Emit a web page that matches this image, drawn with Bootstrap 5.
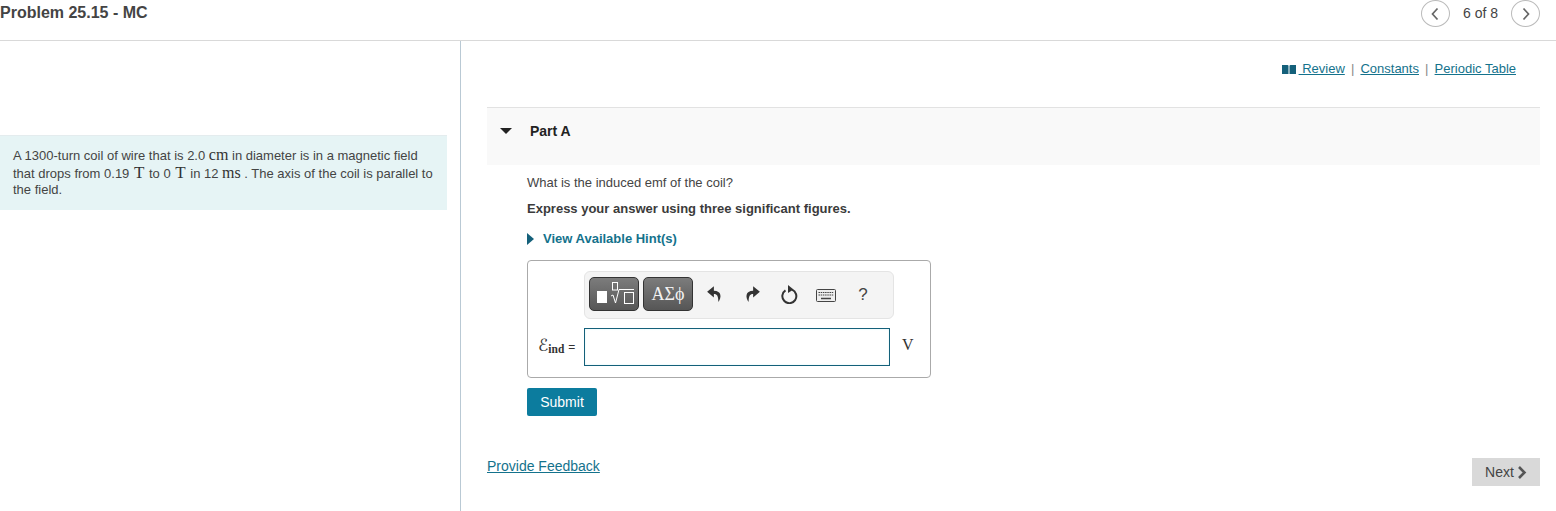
<!DOCTYPE html>
<html lang="en">
<head>
    <meta charset="UTF-8">
    <meta name="viewport" content="width=device-width, initial-scale=1.0">
    <title>Problem 25.15 - MC</title>
    <link href="https://cdn.jsdelivr.net/npm/bootstrap@5.3.3/dist/css/bootstrap.min.css" rel="stylesheet">
    <style>
        html, body { height: 511px; overflow: hidden; }
        body { font-family: "Liberation Sans", Arial, sans-serif; font-size: 13px; color: #333; background: #fff; }
        a { color: #14728c; }
        .top-bar { height: 41px; border-bottom: 1px solid #d9d9d9; }
        .prob-title { font-size: 16px; font-weight: 700; color: #444; margin: 3px 0 0; line-height: 20px; }
        .pager { margin: 0 16px 0 0; font-size: 14px; color: #444; gap: 13px; }
        .round-btn { width: 29px; height: 27px; border: 1px solid #bbb; border-radius: 50%; background: #fff; padding: 0; }
        .round-btn svg { display: block; margin: 0 auto; }
        .side-pane { width: 461px; height: 470px; border-right: 1px solid #b9c9d4; padding-top: 94px; }
        .intro-box { width: 447px; height: 75px; background: #e6f4f5; border-top: 1px solid #e4ecee; padding: 11px 13px 0; font-size: 13px; line-height: 16px; color: #444; }
        .unit-txt { font-family: "Liberation Serif", serif; font-size: 16px; line-height: 1; color: #333; }
        .unit-tesla { font-size: 17px; padding: 0 1px; }
        .work-pane { padding: 0 16px 0 26px; }
        .link-row { height: 66px; padding: 19px 24px 0 0; font-size: 13px; line-height: 17px; color: #888; }
        .link-book { margin-right: 3px; }
        .link-sep { margin: 0 2.5px; }
        .part-head { height: 58px; background: #f9f9f9; border-top: 1px solid #e2e2e2; padding: 14px 0 0 13px; font-size: 14px; font-weight: 700; color: #222; line-height: 18px; gap: 18px; }
        .tri-down { width: 0; height: 0; margin-top: 6px; border-left: 6px solid transparent; border-right: 6px solid transparent; border-top: 6px solid #222; }
        .tri-right { width: 0; height: 0; border-top: 6px solid transparent; border-bottom: 6px solid transparent; border-left: 7px solid #14607a; }
        .part-body { padding: 9px 0 0 40px; }
        .ask-txt { font-size: 13px; line-height: 18px; color: #444; margin: 0 0 8px; }
        .ask-note { font-size: 13px; font-weight: 700; line-height: 18px; color: #3b3b3b; margin: 0 0 12px; }
        .hint-link { font-size: 13px; font-weight: 700; line-height: 18px; color: #14728c; text-decoration: none; gap: 9px; }
        .answer-box { width: 404px; height: 118px; margin-top: 12px; border: 1px solid #aaa; border-radius: 4px; padding: 10px 0 0 56px; }
        .tool-strip { width: 310px; height: 48px; background: #f4f4f4; border: 1px solid #e4e4e4; border-radius: 6px; padding: 5px 0 0 4px; }
        .tool-dark { height: 34px; background: linear-gradient(#7c7c7c, #565656); border: 1px solid #333; border-radius: 5px; color: #fff; padding: 0; }
        .tool-math { width: 50px; }
        .tool-greek { width: 50px; margin: 0 3px 0 4px; font-family: "Liberation Serif", serif; font-size: 18px; line-height: 30px; color: #f2f2f2; }
        .tool-ico { width: 37px; height: 34px; }
        .tool-key { padding-top: 3px; }
        .tool-ask { width: 37px; padding-left: 1px; font-size: 17px; color: #444; text-align: center; line-height: 35px; }
        .answer-row { margin: 9px 0 0 -45px; }
        .answer-label { width: 45px; margin: -3px 0 0 -1px; font-family: "DejaVu Sans", serif; font-size: 17px; color: #333; white-space: nowrap; line-height: 20px; }
        .answer-label sub { font-family: "Liberation Serif", serif; font-size: 11.5px; font-weight: 700; bottom: -.2em; }
        .answer-label span { font-family: "Liberation Sans", sans-serif; font-size: 12px; margin-left: 4px; }
        .answer-input { width: 306px; height: 38px; margin-left: 1px; border: 1px solid #14607a; border-radius: 0; background: #fff; box-shadow: inset 0 0 2px #d4f2f6; }
        .unit-v { font-family: "Liberation Serif", serif; font-size: 16px; margin: -4px 0 0 12px; color: #333; }
        .send-btn { width: 70px; height: 28px; margin-top: 10px; background: #0c7c9e; border: 0; border-radius: 2px; color: #fff; font-size: 14px; padding: 0; }
        .foot-row { margin-top: 41px; }
        .feedback-link { font-size: 14px; line-height: 18px; }
        .next-btn { width: 68px; height: 28px; margin-top: 1px; background: #d9d9d9; border: 0; border-radius: 0; color: #444; font-size: 14px; padding: 0; gap: 3px; }
    </style>
</head>
<body>
    <div class="top-bar d-flex justify-content-between">
        <h1 class="prob-title">Problem 25.15 - MC</h1>
        <div class="pager d-flex align-items-center align-self-start">
            <button class="round-btn" type="button" aria-label="Previous">
                <svg width="10" height="14" viewBox="0 0 10 14"><path d="M7.500 1.500 2.500 7l5 5.500" fill="none" stroke="#666" stroke-width="1.700"/></svg>
            </button>
            <span>6 of 8</span>
            <button class="round-btn" type="button" aria-label="Next">
                <svg width="10" height="14" viewBox="0 0 10 14"><path d="M2.500 1.500 7.500 7l-5 5.500" fill="none" stroke="#666" stroke-width="1.700"/></svg>
            </button>
        </div>
    </div>
    <div class="d-flex">
        <div class="side-pane flex-shrink-0">
            <div class="intro-box">
                A 1300-turn coil of wire that is 2.0 <span class="unit-txt">cm</span> in diameter is in a magnetic field that drops from 0.19 <span class="unit-txt unit-tesla">T</span> to 0 <span class="unit-txt unit-tesla">T</span> in 12 <span class="unit-txt">ms</span> . The axis of the coil is parallel to the field.
            </div>
        </div>
        <div class="work-pane flex-grow-1">
            <div class="link-row text-end">
                <svg class="link-book" width="14" height="9" viewBox="0 0 14 9"><path d="M0 0h5.500Q6.500 0 6.500 1v8H0zM14 0H8.500Q7.500 0 7.500 1v8H14z" fill="#14607a"/></svg><a href="#">&nbsp;Review</a><span class="link-sep"> | </span><a href="#">Constants</a><span class="link-sep"> | </span><a href="#">Periodic Table</a>
            </div>
            <div class="part-head d-flex">
                <div class="tri-down"></div>
                <span>Part A</span>
            </div>
            <div class="part-body">
                <p class="ask-txt">What is the induced emf of the coil?</p>
                <p class="ask-note">Express your answer using three significant figures.</p>
                <a href="#" class="hint-link d-flex align-items-center"><span class="tri-right"></span>View Available Hint(s)</a>
                <div class="answer-box">
                    <div class="tool-strip d-flex align-items-start">
                        <button class="tool-dark tool-math" type="button" aria-label="Templates">
                            <svg width="48" height="32" viewBox="0 0 48 32"><rect x="7" y="13" width="10" height="12" fill="#fff"/><path d="M21 18l2-1 2.500 8 3.500-13.500h15" fill="none" stroke="#fff"/><rect x="22.500" y="4.500" width="5" height="7.500" fill="none" stroke="#fff"/><rect x="34.500" y="14.500" width="9" height="11" fill="none" stroke="#fff"/></svg>
                        </button>
                        <button class="tool-dark tool-greek" type="button">ΑΣϕ</button>
                        <div class="tool-ico d-flex align-items-center justify-content-center">
                            <svg width="18" height="18" viewBox="0 0 16 16"><path d="M7 1 1 6l6 5V8c3 0 4 2 4 7 3-4 3-10-4-10z" fill="#333"/></svg>
                        </div>
                        <div class="tool-ico d-flex align-items-center justify-content-center">
                            <svg width="18" height="18" viewBox="0 0 16 16"><path d="M9 1l6 5-6 5V8c-3 0-4 2-4 7C2 11 2 5 9 5z" fill="#333"/></svg>
                        </div>
                        <div class="tool-ico d-flex align-items-center justify-content-center">
                            <svg width="18" height="20" viewBox="0 0 18 20"><path d="M5.500 6.300A7 7 0 1 0 12 5.700" fill="none" stroke="#333" stroke-width="2"/><path d="M8 1l5.500 4.500L8 9z" fill="#333"/></svg>
                        </div>
                        <div class="tool-ico tool-key d-flex align-items-center justify-content-center">
                            <svg width="20" height="13" viewBox="0 0 20 13"><rect x=".5" y=".5" width="19" height="12" rx="1" fill="#eee" stroke="#444"/><path d="M2.500 3.500h15M2.500 6h15" stroke="#444" stroke-dasharray="1.500 .7"/><path d="M5 9.500h10" stroke="#444" stroke-width="1.500"/></svg>
                        </div>
                        <div class="tool-ask">?</div>
                    </div>
                    <div class="answer-row d-flex align-items-center">
                        <div class="answer-label">ℰ<sub>ind</sub><span>=</span></div>
                        <input class="answer-input" type="text" aria-label="Answer">
                        <span class="unit-v">V</span>
                    </div>
                </div>
                <button class="send-btn d-block" type="button">Submit</button>
            </div>
            <div class="foot-row d-flex justify-content-between align-items-start">
                <a href="#" class="feedback-link">Provide Feedback</a>
                <button class="next-btn d-flex align-items-center justify-content-center" type="button">Next <svg width="10" height="13" viewBox="0 0 10 13"><path d="M2 1l5.500 5.500L2 12" fill="none" stroke="#555" stroke-width="2.600"/></svg></button>
            </div>
        </div>
    </div>
    <script src="https://cdn.jsdelivr.net/npm/bootstrap@5.3.3/dist/js/bootstrap.bundle.min.js"></script>
</body>
</html>
